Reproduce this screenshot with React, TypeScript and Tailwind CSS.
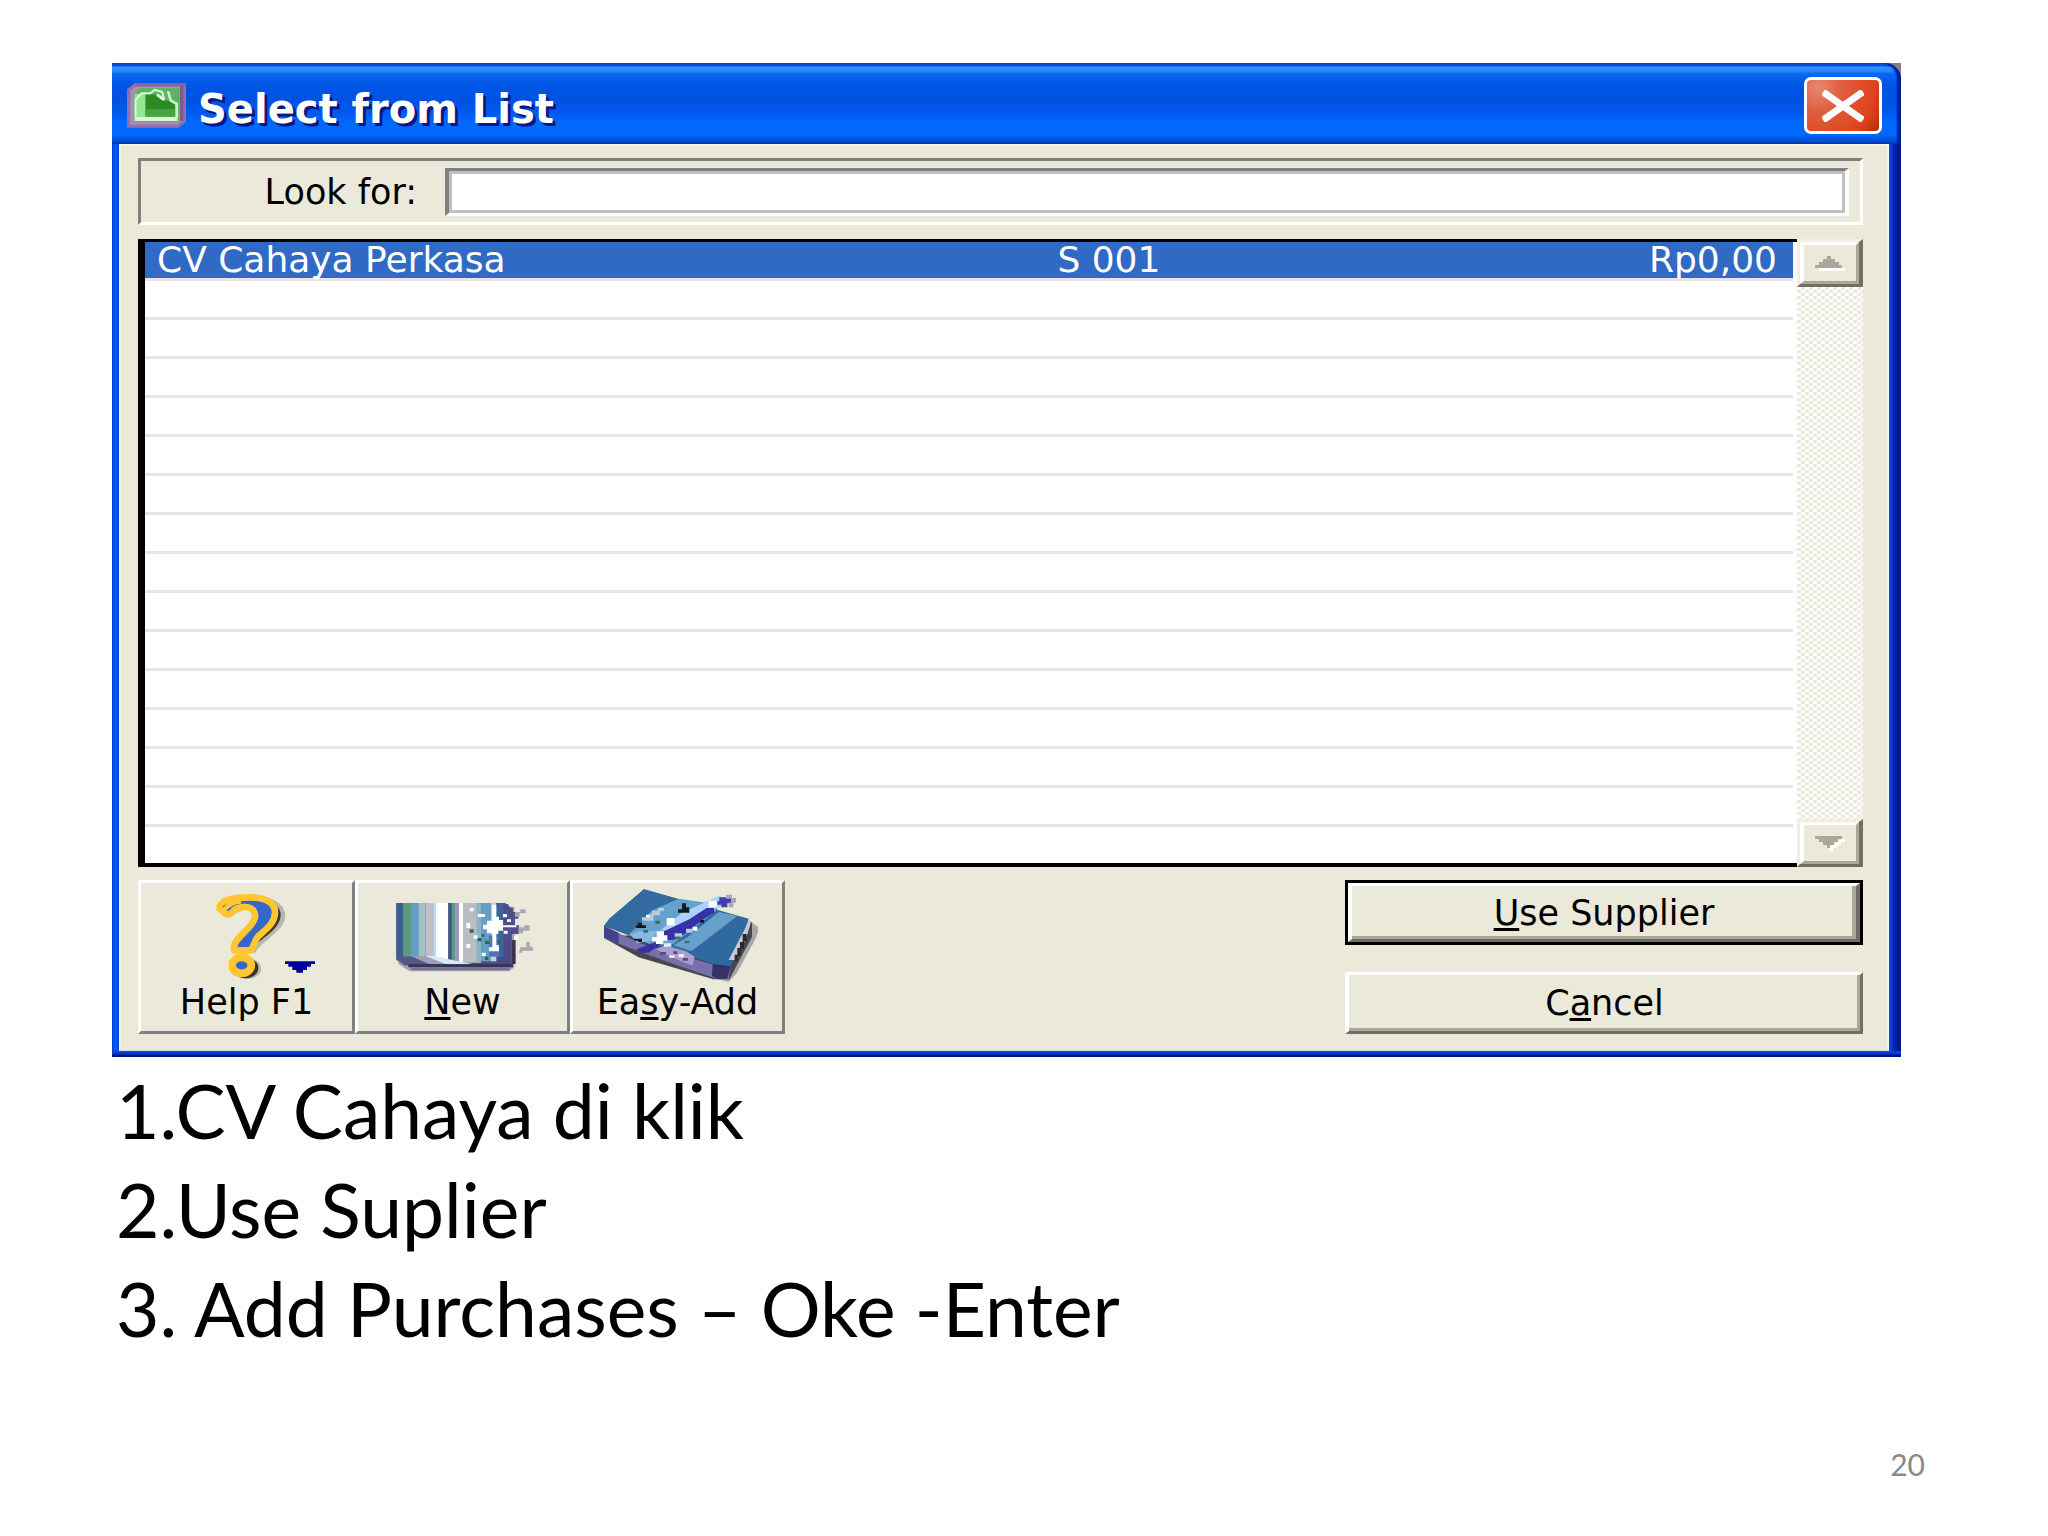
import { useState } from "react";

interface Supplier {
  name: string;
  code: string;
  balance: string;
}

const suppliers: Supplier[] = [
  { name: "CV Cahaya Perkasa", code: "S 001", balance: "Rp0,00" },
];

const ROW_COUNT = 16;

function AppIcon() {
  return (
    <svg viewBox="80 98 178 134" className="h-[45px] w-[59px]" aria-hidden="true">
      <path d="M104 98H258V214L236 232H80V116Z" fill="#8f72ab" />
      <path d="M110 106H248V210L232 222H90V120Z" fill="#a98bbd" />
      <path d="M110 98H258V108H110Z" fill="#8a6398" />
      <path d="M240 104H250V212H240Z" fill="#7d5c8c" />
      <path d="M118 112H238V214H102V130Z" fill="#5db45e" />
      <path d="M103 130H136V200H103Z" fill="#93e694" />
      <path d="M136 132H170L188 150H224V196H136Z" fill="#2c8c22" />
      <path d="M136 176H224V198H136Z" fill="#48a440" />
      <path d="M103 200H232V212H103Z" fill="#d8fbd2" />
      <path d="M106 198V148L124 128H150L164 118L186 124L192 148" fill="none" stroke="#d9f7da" strokeWidth="6" />
      <path d="M204 122L212 150L230 160V204" fill="none" stroke="#c9f3c9" strokeWidth="8" />
      <path d="M170 132L192 148" stroke="#e8ffe6" strokeWidth="8" />
    </svg>
  );
}

function HelpIcon() {
  return (
    <svg viewBox="156 84 453 282" className="h-[94px] w-[151px]" aria-hidden="true">
      <g fill="none" stroke="#b9b6ae" strokeWidth="34" strokeLinejoin="round">
        <path d="M320 160C365 120 470 112 482 164C484 206 400 236 392 276" />
      </g>
      <g fill="none" stroke="#35322f" strokeWidth="30" strokeLinejoin="round">
        <path d="M314 158C355 122 460 118 470 162C472 206 390 232 384 268" />
      </g>
      <ellipse cx="386" cy="326" rx="40" ry="31" fill="#b9b6ae" />
      <ellipse cx="379" cy="324" rx="39" ry="31" fill="#35322f" />
      <path
        d="M298 142C304 120 350 112 390 112C444 112 470 130 468 160C466 194 436 210 417 230C405 244 405 260 395 271H345C340 248 364 230 384 208C404 188 416 166 402 150C386 134 352 142 342 154C332 166 320 166 314 156Z"
        fill="#3467cb"
        stroke="#ffc62f"
        strokeWidth="20"
        strokeLinejoin="round"
      />
      <path d="M314 150C330 132 350 124 366 124" fill="none" stroke="#ffc62f" strokeWidth="14" />
      <path d="M290 150V132L306 116" fill="none" stroke="#fff0a8" strokeWidth="5" />
      <ellipse cx="368" cy="316" rx="29" ry="24" fill="#3467cb" stroke="#ffc62f" strokeWidth="23" />
      <path d="M326 336V300L342 286" fill="none" stroke="#fff0a8" strokeWidth="5" />
      <path d="M498 304H588V312H576V320H564V330H552V338H532V330H520V320H508V312H498Z" fill="#00009c" />
    </svg>
  );
}

function NewIcon() {
  return (
    <svg viewBox="-156 84 456 282" className="h-[94px] w-[152px]" aria-hidden="true">
      <path d="M-122 140H226V322L210 334H-88L-122 312Z" fill="#a5a0b5" />
      <path d="M-128 129H198L218 145V316H-104L-128 296Z" fill="#4c4a86" />
      <path d="M-128 129H-108V290H-128Z" fill="#3d5f8e" />
      <path d="M-108 129H-84V290H-108Z" fill="#5b9b80" />
      <path d="M-84 129H-62V290H-84Z" fill="#619fca" />
      <path d="M-62 129H-40V290H-62Z" fill="#a2bfc4" />
      <path d="M-40 129H-10V300H-40Z" fill="#c0c0c4" />
      <path d="M-10 129H28V306H-10Z" fill="#ffffff" />
      <path d="M-16 129H-9V290H-16Z" fill="#b6dcff" />
      <path d="M28 129H38V300H28Z" fill="#34597e" />
      <path d="M38 129H48V300H38Z" fill="#5b9b80" />
      <path d="M48 129H60V304H48Z" fill="#a095c2" />
      <path d="M60 129H72V308H60Z" fill="#ffffff" />
      <path d="M72 129H125V308H72Z" fill="#b9bcc0" />
      <path d="M112 129H126V308H112Z" fill="#8db3c4" />
      <path d="M126 129H156V304H126Z" fill="#649fc6" />
      <path d="M156 129H172V304H156Z" fill="#bcd5e6" />
      <path d="M172 129H194V290H172Z" fill="#3c6699" />
      <path d="M150 226H180V290H150Z" fill="#4e76b4" />
      <path d="M-128 290H-70L-30 300L10 312H-104L-128 300Z" fill="#57578a" />
      <path d="M-84 288H-40L0 304L34 312H-30Z" fill="#a39dbd" />
      <path d="M-40 288H-10L30 298L100 312H20Z" fill="#d3eaff" />
      <path d="M-92 313H222V322H-92Z" fill="#38364a" />
      <path d="M-84 322H212V331H-84Z" fill="#77749a" />
      <path d="M218 240H230V312H218Z" fill="#39374f" />
      <path d="M196 132H208V144H222V156H238V176H228V196H240V222H218V238H196Z" fill="#504e8b" />
      <path
        d="M228 156H244V148H260V160H242V170H228ZM238 202H256V196H272V212H252V220H238ZM244 262H262V246H272V260H282V272H250V278H240Z"
        fill="#aaa7b2"
      />
      <path d="M160 134H172V170H180V180H192V196H232V202H192V212H178V222H172V256H180V274H150V262H160V220H144V208H132V194H144V182H160Z" fill="#ffffff" />
      <path
        d="M92 144H104V154H92ZM116 162H138V171H116ZM82 188H94V204H82ZM104 226H116V236H104ZM82 252H94V264H82ZM192 162H204V172H192ZM194 212H206V221H194ZM226 228H236V240H226ZM128 278H140V288H128ZM204 178H216V186H204Z"
        fill="#f8fcff"
      />
      <path
        d="M92 208H104V218H92ZM116 234H128V244H116ZM138 242H150V252H138ZM128 222H136V230H128ZM138 290H148V300H138ZM176 240H184V250H176Z"
        fill="#2c684f"
      />
    </svg>
  );
}

function EasyAddIcon() {
  return (
    <svg viewBox="474 84 480 282" className="h-[94px] w-[160px]" aria-hidden="true">
      <path d="M506 232L600 280L800 350L866 366L890 340L946 238L958 204L926 180L900 170Z" fill="#aaa5a7" />
      <path d="M496 236L596 292L820 358L868 358L888 320L936 230V188L900 180Z" fill="#48464e" />
      <path d="M492 198L600 250L820 314L872 318L866 356H830L700 312L580 268L492 234Z" fill="#7770ad" />
      <path d="M492 198L536 218V250L492 234Z" fill="#44438a" />
      <path d="M818 310L872 318L862 356H832L816 348Z" fill="#353267" />
      <path d="M612 88L926 176L916 206L872 318L818 312L492 198L508 176Z" fill="#30699f" />
      <path d="M612 88L716 118L634 152L604 178L582 212L566 226L492 198L508 176Z" fill="#336a9f" />
      <path d="M716 116L800 128L834 148L700 252L640 258L566 224L604 186L634 152Z" fill="#66a1cd" />
      <path d="M836 156L892 168L754 274L700 256L744 230Z" fill="#67a0cc" />
      <path d="M866 300L916 204L926 178L932 190L918 236L884 300Z" fill="#c9c8d4" />
      <path d="M884 300V284H892V264H900V246H908V222H920V244H912V266H902V288H892V306Z" fill="#27262c" />
      <path d="M598 214L650 212L640 240L592 250L572 224Z" fill="#88b8e2" />
      <path d="M660 212L726 158L836 108L860 116L842 140L790 158L716 206Z" fill="#a9d2fc" />
      <path d="M838 112H858V108H874V130H862V142H844V134H832V124H838Z" fill="#433fa7" />
      <path d="M668 216L748 178L800 144H822V158L790 178L734 222L700 240H672Z" fill="#3830a8" />
      <path d="M590 268L640 248L672 246L646 264L626 278H598Z" fill="#3931a2" />
      <path d="M858 104H876V114H888V128H880V142H866V128H874V116H858Z" fill="#aaa4bf" />
      <path d="M806 122H830V142H806ZM680 174H704V196H680ZM650 214H672V226H682V242H670V252H648V244H636V232H650ZM758 200H772V212H758ZM618 164H638V178H618Z" fill="#ffffff" />
      <path d="M726 130H738V142H748V158H714V148H726ZM594 188H606V196H618V204H588V196H594ZM582 236H606V246H594V242H582ZM780 180H792V188H780Z" fill="#121b20" />
      <path d="M636 152H654V144H672V152H660V166H640V182H606V172H628V164H636ZM704 220H726V230H704ZM738 206H758V218H738Z" fill="#b9cde1" />
      <path d="M646 182H660V192H646ZM706 230H722V238H706ZM734 242H748V250H734ZM610 210H624V218H610Z" fill="#386e6b" />
      <path d="M648 268L674 256L738 274L764 290L758 316L734 308L680 284Z" fill="#a89fd0" />
      <path d="M672 250H694V260H672ZM716 282H732V292H716ZM688 286H704V294H688Z" fill="#ece9f5" />
      <path d="M660 276H678V284H660ZM700 274H712V282H700ZM728 294H744V302H728Z" fill="#55516d" />
    </svg>
  );
}

function ScrollButton({ direction }: { direction: "up" | "down" }) {
  const up = direction === "up";
  return (
    <button
      type="button"
      aria-label={up ? "Scroll up" : "Scroll down"}
      className="h-12 w-full border-y-3 border-r-4 border-l-3 border-t-[#f1efe2] border-r-[#716f64] border-b-[#716f64] border-l-[#f1efe2]"
    >
      <span className="flex h-full items-center justify-center border-t-3 border-r-3 border-b-3 border-l-4 border-t-white border-r-[#aca899] border-b-[#aca899] border-l-white bg-[#ebe9d9]">
        <svg viewBox="0 0 30 15" className="h-[15px] w-[30px]" aria-hidden="true">
          {up ? (
            <>
              <path d="M4 12H30V15H4Z" fill="#fff" />
              <path d="M12 0H16V3H20V6H24V9H27V12H0V9H4V6H8V3H12Z" fill="#aca899" />
            </>
          ) : (
            <>
              <path d="M27 3H30V6H26V9H22V12H18V15H14V11Z" fill="#fff" />
              <path d="M0 0H27V3H23V6H19V9H15V12H12V9H8V6H4V3H0Z" fill="#aca899" />
            </>
          )}
        </svg>
      </span>
    </button>
  );
}

const toolButton =
  "flex flex-col items-center gap-0.5 border-3 border-t-white border-r-[#808080] border-b-[#808080] border-l-white pt-[5px] leading-9";
const hotkey = "underline decoration-3 underline-offset-3 [text-decoration-skip-ink:none]";

export default function App() {
  const [query, setQuery] = useState("");
  const [selected, setSelected] = useState(0);

  return (
    <main className="flex min-h-screen flex-col bg-white pt-[63px] pr-[147px] pl-28 text-black">
      <section className="font-['DejaVu_Sans',sans-serif] text-[35px]">
        {/* Title bar */}
        <div className="bg-[#808080]">
          <header className="flex h-[81px] items-center gap-3 rounded-tr-[16px] bg-[linear-gradient(to_bottom,#0a50d8_0,#0a50d8_3px,#3293ff_4px,#2488ff_8px,#0a66f2_11px,#0055e5_22px,#0052e0_36px,#0059ee_50px,#0068ff_60px,#0068ff_72px,#0050d8_77px,#0040c0_81px)] pt-1 pr-[19px] pl-[15px] shadow-[inset_-4px_0_2px_#001ea0]">
            <AppIcon />
            <h1 className="flex-1 pt-1.5 text-[40px] leading-none font-bold text-white [text-shadow:3px_3px_0_#0a1883]">
              Select from List
            </h1>
            <button
              type="button"
              aria-label="Close"
              className="flex h-[57px] w-[78px] items-center justify-center rounded-[7px] border-3 border-white bg-[radial-gradient(circle_at_15%_15%,#e88672_0,#de5b3c_35%,#e0451c_75%,#b32c08_100%)]"
            >
              <svg viewBox="0 0 42 32" className="h-8 w-[42px]" aria-hidden="true">
                <path d="M4 4L38 28M38 4L4 28" stroke="#fff" strokeWidth="7" strokeLinecap="square" />
              </svg>
            </button>
          </header>
        </div>

        {/* Window frame and client area */}
        <div className="bg-[linear-gradient(to_top,#00108c_0,#00108c_2px,#0038d0_3px,#0848e0_6px,transparent_6px),linear-gradient(to_left,#00108c_0,#001ea0_6px,#0831d9_9px,#0850e8_12px,transparent_12px),linear-gradient(to_right,#0040d8_0,#0062f4_4px,#0040d0_7px)] pr-3 pb-1.5 pl-[7px]">
          <div className="border-2 border-[#f4f7e6] border-b-[#d0e8ec] bg-[#ebe9d9] pt-3 pr-6 pb-[15px] pl-[17px]">
            <div className="flex h-[67px] items-center border-3 border-t-[#808080] border-r-white border-b-white border-l-[#808080] pr-[11px]">
              <label htmlFor="look-for" className="w-[304px] pr-7 text-right leading-9">
                Look for:
              </label>
              <div className="flex-1 border-t-3 border-r-4 border-b-3 border-l-4 border-t-[#808080] border-r-white border-b-white border-l-[#808080]">
                <input
                  id="look-for"
                  type="text"
                  value={query}
                  onChange={(e) => setQuery(e.target.value)}
                  className="block h-[42px] w-full border-3 border-[#c0c0c0] bg-white px-2 leading-9 outline-none"
                />
              </div>
            </div>

            {/* Supplier list */}
            <div className="mt-[14px] flex">
              <div className="flex-1 border-t-3 border-b-4 border-l-7 border-black bg-white pr-1">
                <table className="w-full table-fixed border-separate border-spacing-0 text-[36px] leading-9">
                  <tbody>
                    {Array.from({ length: ROW_COUNT }, (_, i) => {
                      const supplier = suppliers[i];
                      const last = i === ROW_COUNT - 1;
                      return (
                        <tr
                          key={i}
                          onClick={() => supplier && setSelected(i)}
                          className={supplier && i === selected ? "bg-[#316ac5] text-white" : "bg-white"}
                        >
                          <td className={last ? "h-9 w-[55%] p-0" : "h-[39px] w-[55%] border-b-3 border-[#e6e6ea] p-0 pl-3"}>
                            {supplier?.name}
                          </td>
                          <td className={last ? "p-0" : "border-b-3 border-[#e6e6ea] p-0 pl-1.5"}>{supplier?.code}</td>
                          <td className={last ? "p-0" : "border-b-3 border-[#e6e6ea] p-0 pr-4 text-right"}>
                            {supplier?.balance}
                          </td>
                        </tr>
                      );
                    })}
                  </tbody>
                </table>
              </div>
              <div className="flex w-[66px] flex-col justify-between bg-[repeating-conic-gradient(#ebe9d9_0_25%,#ffffff_0_50%)] bg-[length:8px_6px]">
                <ScrollButton direction="up" />
                <ScrollButton direction="down" />
              </div>
            </div>

            {/* Bottom buttons */}
            <div className="mt-[13px] flex items-start justify-between">
              <div className="grid h-[154px] w-[647px] grid-cols-[217px_1fr_1fr]">
                <button type="button" className={toolButton}>
                  <HelpIcon />
                  <span>Help F1</span>
                </button>
                <button type="button" className={toolButton}>
                  <NewIcon />
                  <span>
                    <span className={hotkey}>N</span>ew
                  </span>
                </button>
                <button type="button" className={toolButton}>
                  <EasyAddIcon />
                  <span>
                    Ea<span className={hotkey}>s</span>y-Add
                  </span>
                </button>
              </div>
              <div className="flex w-[518px] flex-col gap-[27px]">
                <button type="button" className="h-[65px] border-3 border-black leading-9">
                  <span className="flex h-full items-center justify-center border-t-3 border-r-4 border-b-3 border-l-4 border-t-white border-r-[#716f64] border-b-[#716f64] border-l-white shadow-[inset_-4px_-3px_0_#aca899]">
                    <span>
                      <span className={hotkey}>U</span>se Supplier
                    </span>
                  </span>
                </button>
                <button
                  type="button"
                  className="h-[62px] border-t-3 border-r-3 border-b-3 border-l-4 border-t-white border-r-[#716f64] border-b-[#716f64] border-l-white leading-9 shadow-[inset_-3px_-3px_0_#aca899]"
                >
                  C<span className={hotkey}>a</span>ncel
                </button>
              </div>
            </div>
          </div>
        </div>
      </section>

      {/* Slide notes */}
      <div className="pt-1 pl-1 font-['Lato',sans-serif] text-[75px] leading-[99px]">
        <p>1.CV Cahaya di klik</p>
        <p>2.Use Suplier</p>
        <p>3. Add Purchases – Oke -Enter</p>
      </div>

      <footer className="-mr-6 pt-[88px] text-right font-['Lato',sans-serif] text-[30px] leading-9 text-[#898989]">20</footer>
    </main>
  );
}
